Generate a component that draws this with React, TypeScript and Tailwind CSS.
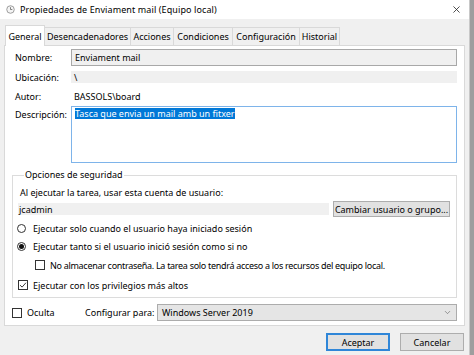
import { ChevronDown } from 'lucide-react';

function Radio({ checked }: { checked?: boolean }) {
  return (
    <span className="w-[9px] h-[9px] shrink-0 rounded-full border border-[#333] bg-white flex items-center justify-center">
      {checked && <span className="w-[5px] h-[5px] rounded-full bg-[#111]" />}
    </span>
  );
}

function Check({ checked }: { checked?: boolean }) {
  return (
    <span className="w-[10px] h-[10px] shrink-0 border border-[#333] bg-white flex items-center justify-center">
      {checked && (
        <svg viewBox="0 0 10 10" className="w-[8px] h-[8px]">
          <path d="M1.3 5.2 L3.9 7.6 L8.7 2.2" stroke="#222" strokeWidth="1.1" fill="none" />
        </svg>
      )}
    </span>
  );
}

const tabs = [
  { label: 'Desencadenadores', w: 'w-[86px]' },
  { label: 'Acciones', w: 'w-[43px]' },
  { label: 'Condiciones', w: 'w-[59px]' },
  { label: 'Configuración', w: 'w-[67px]' },
  { label: 'Historial', w: 'w-[40px]' },
];

export default function App() {
  return (
    <div className="w-[474px] h-[355px] flex bg-[#f0f0f0] text-[9px] text-black font-['Noto_Sans',sans-serif] leading-none overflow-hidden">
      <div className="w-[469px] flex flex-col">
        {/* title bar */}
        <div className="h-[19px] bg-white flex items-center pl-[6px] pr-[9px]">
          <svg viewBox="0 0 10 10" className="w-[9px] h-[9px]">
            <circle cx="5" cy="5" r="4.2" fill="#f4f4f4" stroke="#8a8a8a" strokeWidth="0.9" />
            <path d="M5 2.4 V5 H7" stroke="#666" strokeWidth="0.9" fill="none" />
          </svg>
          <span className="ml-[5px] tracking-[0.1px]">Propiedades de Enviament mail (Equipo local)</span>
          <svg viewBox="0 0 8 8" className="ml-auto w-[7px] h-[7px]">
            <path d="M0.5 0.5 L7.5 7.5 M7.5 0.5 L0.5 7.5" stroke="#222" strokeWidth="0.9" />
          </svg>
        </div>

        {/* tabs */}
        <div className="mt-[6px] pl-[5px] h-[20px] flex items-end">
          <div className="relative z-10 -mb-px w-[40px] h-[21px] bg-white border border-b-0 border-[#d9d9d9] flex items-center justify-center">
            General
          </div>
          {tabs.map((t) => (
            <div
              key={t.label}
              className={`${t.w} h-[18px] bg-[#f0f0f0] border-t border-r border-[#d9d9d9] flex items-center justify-center`}
            >
              {t.label}
            </div>
          ))}
        </div>

        {/* panel */}
        <div className="ml-[4px] w-[461px] h-[281px] bg-white border border-[#d9d9d9] pl-[7px] pr-[7px] pt-[3px] flex flex-col">
          <div className="flex items-center h-[17px]">
            <span className="w-[59px] pl-[3px]">Nombre:</span>
            <div className="flex-1 h-[17px] bg-[#f0f0f0] border border-[#a8a8a8] flex items-center pl-[3px]">
              Enviament mail
            </div>
          </div>
          <div className="flex items-center h-[12px] mt-[5px]">
            <span className="w-[59px] pl-[3px]">Ubicación:</span>
            <div className="flex-1 h-[12px] bg-[#f0f0f0] flex items-center pl-[3px]">\</div>
          </div>
          <div className="flex items-center h-[14px] mt-[6px]">
            <span className="w-[59px] pl-[3px]">Autor:</span>
            <span className="pl-[3px]">BASSOLS\board</span>
          </div>
          <div className="flex mt-[3px]">
            <span className="w-[59px] pl-[3px] pt-[4px]">Descripción:</span>
            <div className="flex-1 h-[57px] bg-white border border-[#7eb4ea] pl-[3px] pt-[1px]">
              <span className="inline-flex items-center h-[11px] bg-[#0078d7] text-white">
                Tasca que envia un mail amb un fitxer
              </span>
            </div>
          </div>

          {/* security group */}
          <fieldset className="mt-[6px] border border-[#dcdcdc] pl-[4px] pr-[4px] pb-[2px]">
            <legend className="ml-[7px] px-[1px] leading-[12px]">Opciones de seguridad</legend>
            <div className="mt-[4px] h-[14px] flex items-center pl-[3px]">
              Al ejecutar la tarea, usar esta cuenta de usuario:
            </div>
            <div className="mt-[2px] h-[16px] flex items-center">
              <div className="ml-[1px] w-[311px] h-[12px] bg-[#f0f0f0] flex items-center pl-[1px]">jcadmin</div>
              <div className="ml-[4px] w-[117px] h-[16px] bg-[#e1e1e1] border border-[#adadad] flex items-center justify-center">
                Cambiar usuario o grupo...
              </div>
            </div>
            <div className="mt-[2px] h-[18px] flex items-center gap-[7px]">
              <Radio />
              <span>Ejecutar solo cuando el usuario haya iniciado sesión</span>
            </div>
            <div className="h-[18px] flex items-center gap-[7px]">
              <Radio checked />
              <span>Ejecutar tanto si el usuario inició sesión como si no</span>
            </div>
            <div className="h-[20px] flex items-center gap-[5px] pl-[18px]">
              <Check />
              <span className="tracking-[-0.3px]">
                No almacenar contraseña. La tarea solo tendrá acceso a los recursos del equipo local.
              </span>
            </div>
            <div className="h-[20px] flex items-center gap-[5px] pl-[1px]">
              <Check checked />
              <span>Ejecutar con los privilegios más altos</span>
            </div>
          </fieldset>

          <div className="mt-[6px] h-[17px] flex items-center">
            <div className="w-[73px] flex items-center gap-[5px]">
              <Check />
              <span>Oculta</span>
            </div>
            <span className="w-[72px]">Configurar para:</span>
            <div className="flex-1 h-[17px] bg-[#e5e5e5] border border-[#acacac] flex items-center pl-[4px] pr-[4px]">
              <span>Windows Server 2019</span>
              <ChevronDown className="ml-auto w-[9px] h-[9px] text-[#555]" strokeWidth={1.5} />
            </div>
          </div>
        </div>

        {/* buttons */}
        <div className="mt-[7px] flex justify-end gap-[10px] pr-[5px]">
          <div className="w-[64px] h-[18px] bg-[#e1e1e1] border-2 border-[#2f86d8] flex items-center justify-center">
            Aceptar
          </div>
          <div className="w-[64px] h-[18px] bg-[#e1e1e1] border border-[#adadad] flex items-center justify-center">
            Cancelar
          </div>
        </div>
      </div>
      <div className="w-[5px] bg-[#9e9e9e] border-l border-[#c8c8c8]" />
    </div>
  );
}
